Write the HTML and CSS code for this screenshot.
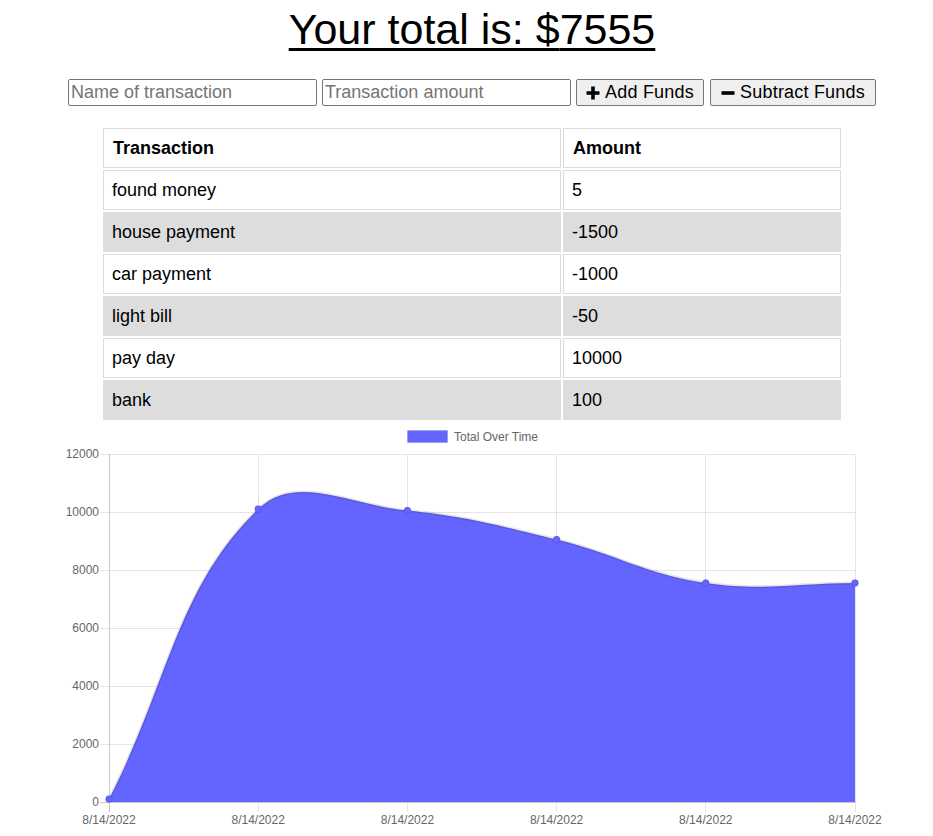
FILE: index.html
```html
<!DOCTYPE html>
<html>
<head>
<meta charset="utf-8">
<title>Budget Tracker</title>
<link rel="stylesheet" href="styles.css">
</head>
<body>
<div class="wrapper">
  <div class="total">Your total is: $<span class="amount">7555</span></div>
  <div class="form">
    <input class="field" type="text" placeholder="Name of transaction">
    <input class="field" type="text" placeholder="Transaction amount">
    <button class="btn btn-add"><svg class="ico" viewBox="0 0 14 14"><path d="M5.2 0.5h3.6v4.7h4.7v3.6H8.8v4.7H5.2V8.8H0.5V5.2h4.7z"/></svg>Add Funds</button>
    <button class="btn btn-sub"><svg class="ico" viewBox="0 0 14 14"><path d="M0.5 5.2h13v3.6h-13z"/></svg>Subtract Funds</button>
  </div>
  <table class="tx">
    <thead>
      <tr><th class="c1">Transaction</th><th class="c2">Amount</th></tr>
    </thead>
    <tbody>
      <tr><td>found money</td><td>5</td></tr>
      <tr><td>house payment</td><td>-1500</td></tr>
      <tr><td>car payment</td><td>-1000</td></tr>
      <tr><td>light bill</td><td>-50</td></tr>
      <tr><td>pay day</td><td>10000</td></tr>
      <tr><td>bank</td><td>100</td></tr>
    </tbody>
  </table>
</div>
<svg class="chart" viewBox="0 422 933 414" width="933" height="414">
  <g class="legend">
    <rect x="407.5" y="430.5" width="40" height="12" fill="#6565ff" stroke="rgba(0,0,0,0.1)"/>
    <text x="454" y="441" class="lbl">Total Over Time</text>
  </g>
  <g stroke="#e5e5e5" stroke-width="1">
    <line x1="100" y1="454.5" x2="855.5" y2="454.5"/>
    <line x1="100" y1="512.5" x2="855.5" y2="512.5"/>
    <line x1="100" y1="570.5" x2="855.5" y2="570.5"/>
    <line x1="100" y1="628.5" x2="855.5" y2="628.5"/>
    <line x1="100" y1="686.5" x2="855.5" y2="686.5"/>
    <line x1="100" y1="744.5" x2="855.5" y2="744.5"/>
    <line x1="258.5" y1="454" x2="258.5" y2="812"/>
    <line x1="407.5" y1="454" x2="407.5" y2="812"/>
    <line x1="556.5" y1="454" x2="556.5" y2="812"/>
    <line x1="705.5" y1="454" x2="705.5" y2="812"/>
    <line x1="855.5" y1="454" x2="855.5" y2="812"/>
  </g>
  <path d="M109,799.1 C168.68,683.1 176.31,588.29 258.2,509.1 C295.67,472.87 348.27,504.52 407.4,510.55 C467.63,516.7 497.58,525.21 556.6,539.55 C616.94,554.21 644.9,574.2 705.8,583.05 C764.26,591.54 795.32,582.96 855,582.9 L855,802.5 L109,802.5 Z" fill="#6464ff"/>
  <path d="M109,799.1 C168.68,683.1 176.31,588.29 258.2,509.1 C295.67,472.87 348.27,504.52 407.4,510.55 C467.63,516.7 497.58,525.21 556.6,539.55 C616.94,554.21 644.9,574.2 705.8,583.05 C764.26,591.54 795.32,582.96 855,582.9" fill="none" stroke="rgba(0,0,0,0.1)" stroke-width="3"/>
  <g stroke="#c8c8c8" stroke-width="1">
    <line x1="100" y1="802.5" x2="856" y2="802.5"/>
    <line x1="109.5" y1="454" x2="109.5" y2="812"/>
  </g>
  <g fill="#6464ff" stroke="rgba(0,0,0,0.1)" stroke-width="1">
    <circle cx="109" cy="799.1" r="3.5"/>
    <circle cx="258.2" cy="509.1" r="3.5"/>
    <circle cx="407.4" cy="510.55" r="3.5"/>
    <circle cx="556.6" cy="539.55" r="3.5"/>
    <circle cx="705.8" cy="583.05" r="3.5"/>
    <circle cx="855" cy="582.9" r="3.5"/>
  </g>
  <g class="lbl" text-anchor="end">
    <text x="99" y="458">12000</text>
    <text x="99" y="516">10000</text>
    <text x="99" y="574">8000</text>
    <text x="99" y="632">6000</text>
    <text x="99" y="690">4000</text>
    <text x="99" y="748">2000</text>
    <text x="99" y="806">0</text>
  </g>
  <g class="lbl" text-anchor="middle">
    <text x="109" y="824">8/14/2022</text>
    <text x="258.2" y="824">8/14/2022</text>
    <text x="407.4" y="824">8/14/2022</text>
    <text x="556.6" y="824">8/14/2022</text>
    <text x="705.8" y="824">8/14/2022</text>
    <text x="855" y="824">8/14/2022</text>
  </g>
</svg>
</body>
</html>
```

FILE: styles.css
```css
html, body {
  margin: 0;
  padding: 0;
  background: #fff;
}

body {
  font-family: "Liberation Sans", Arial, sans-serif;
  color: #000;
  font-size: 18px;
}

.wrapper {
  box-sizing: border-box;
  width: 933px;
  padding-left: 11px;
  display: flex;
  flex-direction: column;
  align-items: center;
}

.total {
  font-size: 43px;
  line-height: 50px;
  padding-top: 4px;
  text-decoration: underline;
  text-decoration-thickness: 3px;
  text-underline-offset: 4px;
  text-decoration-skip-ink: auto;
}

.form {
  margin-top: 25px;
  display: flex;
  gap: 5px;
  height: 27px;
}

.field {
  box-sizing: border-box;
  width: 249px;
  height: 27px;
  margin: 0;
  padding: 1px 2px;
  border: 1px solid #767676;
  border-radius: 2px;
  font-family: "Liberation Sans", Arial, sans-serif;
  font-size: 18px;
  color: #000;
  background: #fff;
}

.field::placeholder {
  color: #757575;
}

.btn {
  box-sizing: border-box;
  height: 27px;
  margin: 0;
  padding: 0 6px;
  border: 1px solid #767676;
  border-radius: 2px;
  background: #efefef;
  font-family: "Liberation Sans", Arial, sans-serif;
  font-size: 18px;
  letter-spacing: 0.2px;
  color: #000;
  display: flex;
  align-items: center;
  justify-content: center;
  gap: 5px;
}

.btn-add {
  width: 128px;
}

.btn-sub {
  width: 166px;
  margin-left: 1px;
}

.ico {
  width: 14px;
  height: 14px;
  fill: #000;
}

.tx {
  margin-top: 20px;
  border-spacing: 2px;
  width: 742px;
  text-align: left;
  font-size: 18px;
}

.tx th,
.tx td {
  box-sizing: border-box;
  height: 40px;
  padding: 0 8px;
  border: 1px solid #dcdcdc;
  line-height: 22px;
}

.tx th {
  font-weight: bold;
  padding-left: 9px;
}

.c1 {
  width: 458px;
}

.c2 {
  width: 278px;
}

.tx tbody tr:nth-child(even) td {
  background: #dddddd;
  border-color: #dddddd;
}

.chart {
  display: block;
}

.lbl {
  font-family: "Liberation Sans", Arial, sans-serif;
  font-size: 12px;
  fill: #666;
}
```
